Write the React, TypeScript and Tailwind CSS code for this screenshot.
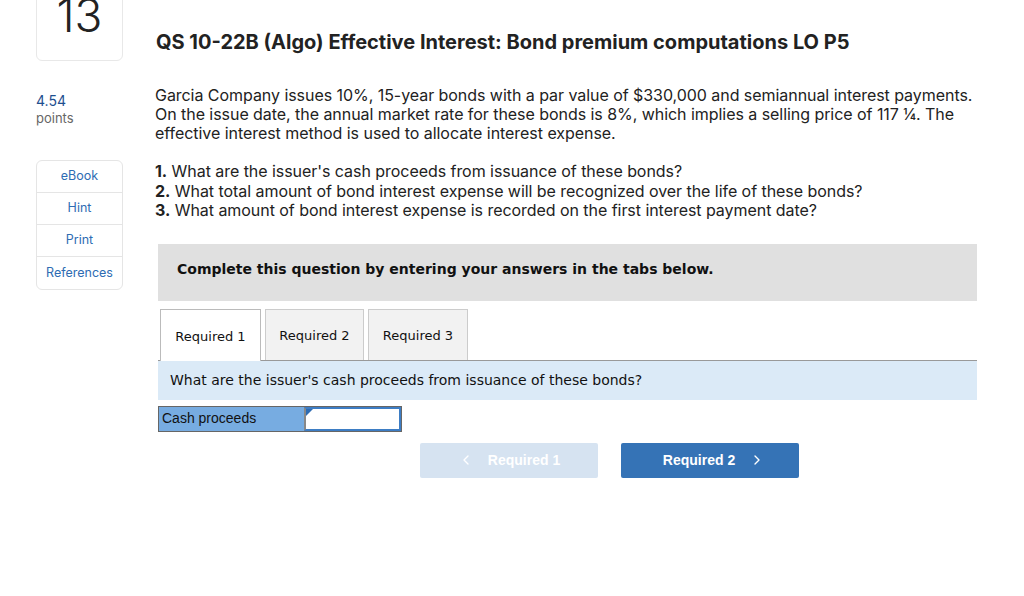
import { ChevronLeft, ChevronRight } from "lucide-react";

const sans = "font-['Inter','Open_Sans',sans-serif]";
const verdana = "font-['DejaVu_Sans','Verdana',sans-serif]";

const menu = ["eBook", "Hint", "Print", "References"];

export default function App() {
  return (
    <div className={`h-[596px] w-[1024px] overflow-hidden bg-white ${sans} text-[#1a1a1a]`}>
      <div className="flex gap-8 pl-9">
        {/* Left column */}
        <div className="flex w-[87px] shrink-0 flex-col">
          <div className="-mt-[26px] flex h-[87px] items-end justify-center rounded-b-md border border-[#e8e8e8] pb-[22px]">
            <span className="text-[46px] leading-none font-light text-[#222]">13</span>
          </div>
          <div className="mt-[30px] text-[14px] leading-[19px] text-[#1e4f8f]">4.54</div>
          <div className="text-[13px] leading-[17px] text-[#666]">points</div>
          <div className="mt-[33px] flex flex-col rounded-md border border-[#e5e5e5]">
            {menu.map((m, i) => (
              <div
                key={m}
                className={`flex h-[32px] items-center justify-center text-[12.5px] text-[#2e6cb3] ${
                  i < menu.length - 1 ? "border-b border-[#e5e5e5]" : ""
                }`}
              >
                {m}
              </div>
            ))}
          </div>
        </div>

        {/* Main column */}
        <div className="flex w-[822px] flex-col pt-[30px]">
          <h1 className="pl-px text-[20px] leading-[24px] font-bold text-[#222]">
            QS 10-22B (Algo) Effective Interest: Bond premium computations LO P5
          </h1>
          <p className="mt-[32px] text-[16px] leading-[19px] tracking-[-0.05px] text-[#222]">
            Garcia Company issues 10%, 15-year bonds with a par value of $330,000 and semiannual interest payments.
            On the issue date, the annual market rate for these bonds is 8%, which implies a selling price of 117 ¼. The
            effective interest method is used to allocate interest expense.
          </p>
          <ol className="mt-[19px] text-[16px] leading-[19.5px] tracking-[-0.05px] text-[#222]">
            <li>
              <b>1.</b> What are the issuer's cash proceeds from issuance of these bonds?
            </li>
            <li>
              <b>2.</b> What total amount of bond interest expense will be recognized over the life of these bonds?
            </li>
            <li>
              <b>3.</b> What amount of bond interest expense is recorded on the first interest payment date?
            </li>
          </ol>

          <div className="mt-[23px] ml-[3px] flex h-[57px] w-[819px] items-center bg-[#e0e0e0] pb-[6px] pl-[19px]">
            <span className={`${verdana} text-[14px] font-bold text-[#111]`}>
              Complete this question by entering your answers in the tabs below.
            </span>
          </div>

          <div className={`ml-[3px] mt-[8px] w-[819px] ${verdana}`}>
            <div className="flex gap-[4px] border-b border-[#999] pl-[2px]">
              <div className="-mb-px flex h-[52px] w-[101px] items-center justify-center border border-b-0 border-[#bbb] bg-white pt-[3px] text-[13px] text-[#111]">
                Required 1
              </div>
              <div className="flex h-[51px] w-[99px] items-center justify-center border border-b-0 border-[#ccc] bg-[#f2f2f2] pt-[3px] text-[13px] text-[#111]">
                Required 2
              </div>
              <div className="flex h-[51px] w-[100px] items-center justify-center border border-b-0 border-[#ccc] bg-[#f2f2f2] pt-[3px] text-[13px] text-[#111]">
                Required 3
              </div>
            </div>
            <div className="flex h-[39px] items-center bg-[#dbeaf7] pl-[12px] text-[14px] text-[#111]">
              What are the issuer's cash proceeds from issuance of these bonds?
            </div>
            <div className="mt-[6px] flex h-[26px] w-[244px] border border-[#666]">
              <div className="flex w-[145px] items-center bg-[#77ace1] pl-[3px] font-['Liberation_Sans',Arial,sans-serif] text-[14px] text-[#111]">
                Cash proceeds
              </div>
              <div className="relative flex-1 border-2 border-[#3d7dc4] border-l-[#888] bg-white">
                <span className="absolute top-0 left-0 h-0 w-0 border-t-[7px] border-r-[7px] border-t-[#2e6cb3] border-r-transparent" />
              </div>
            </div>
            <div className="mt-[11px] flex gap-[23px] pl-[262px] font-['Liberation_Sans',Arial,sans-serif]">
              <div className="flex h-[35px] w-[178px] items-center justify-center gap-[14px] rounded-[2px] bg-[#d6e3f1] text-[14px] font-bold text-white">
                <ChevronLeft size={16} strokeWidth={2} />
                <span>Required 1</span>
              </div>
              <div className="flex h-[35px] w-[178px] items-center justify-center gap-[14px] rounded-[2px] bg-[#3573b6] text-[14px] font-bold text-white">
                <span className="pl-[8px]">Required 2</span>
                <ChevronRight size={16} strokeWidth={2} />
              </div>
            </div>
          </div>
        </div>
      </div>
    </div>
  );
}
